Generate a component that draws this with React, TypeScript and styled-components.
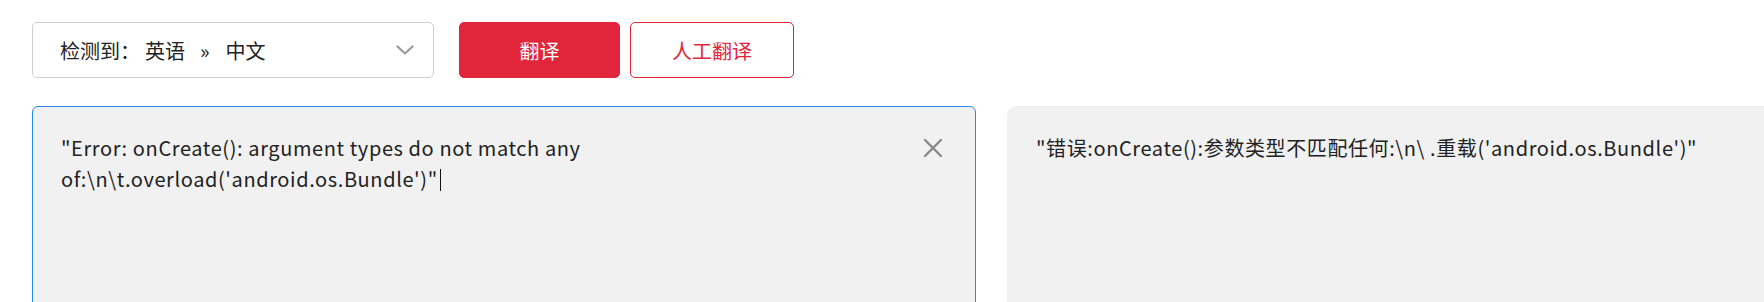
import styled, { createGlobalStyle } from 'styled-components';

const GlobalStyle = createGlobalStyle`
    * {
        box-sizing: border-box;
    }
    body {
        margin: 0;
        background: #fff;
        overflow: hidden;
        font-family: 'Noto Sans CJK SC', 'Noto Sans', sans-serif;
        color: #333;
    }
`;

const sourceText = `"Error: onCreate(): argument types do not match any of:\\n\\t.overload('android.os.Bundle')"`;
const resultText = `"错误:onCreate():参数类型不匹配任何:\\n\\ .重载('android.os.Bundle')"`;

function Chevron() {
    return (
        <svg width="18" height="10" viewBox="0 0 18 10" fill="none">
            <polyline points="1.5,1.5 9,8.5 16.5,1.5" stroke="#9a9a9a" strokeWidth="2.2" strokeLinecap="round" strokeLinejoin="round" />
        </svg>
    );
}

function CloseIcon() {
    return (
        <svg width="20" height="20" viewBox="0 0 20 20" fill="none">
            <path d="M2 2 L18 18 M18 2 L2 18" stroke="#8a8a8a" strokeWidth="2.4" strokeLinecap="round" />
        </svg>
    );
}

export default function App() {
    return (
        <>
            <GlobalStyle />
            <Page>
                <Toolbar>
                    <LangSelect>
                        <LangLabel>
                            <Detected>检测到：</Detected>英语<Arrow>»</Arrow>中文
                        </LangLabel>
                        <Chevron />
                    </LangSelect>
                    <ActionButton variant="solid">翻译</ActionButton>
                    <ActionButton variant="outline">人工翻译</ActionButton>
                </Toolbar>
                <Panels>
                    <Panel focused>
                        <PanelText>
                            {sourceText}
                            <Caret />
                        </PanelText>
                        <ClearButton>
                            <CloseIcon />
                        </ClearButton>
                    </Panel>
                    <Panel>
                        <PanelText>{resultText}</PanelText>
                    </Panel>
                </Panels>
            </Page>
        </>
    );
}

const Page = styled.div`
    padding: 22px 0 0 32px;
`;

const Toolbar = styled.div`
    display: flex;
    align-items: center;
    height: 56px;
`;

const LangSelect = styled.div`
    width: 402px;
    height: 56px;
    border: 1px solid #cfcfcf;
    border-radius: 5px;
    display: flex;
    align-items: center;
    justify-content: space-between;
    padding: 0 19px 0 27px;
    margin-right: 25px;
    cursor: pointer;
`;

const LangLabel = styled.span`
    font-size: 20px;
    color: #222;
    white-space: nowrap;
`;

const Detected = styled.span`
    margin-right: 5px;
`;

const Arrow = styled.span`
    margin: 0 16px 0 15px;
`;

const ActionButton = styled.button<{ variant: 'solid' | 'outline' }>`
    height: 56px;
    width: ${({ variant }) => (variant === 'solid' ? '161px' : '164px')};
    margin-right: 10px;
    border-radius: 5px;
    border: 1px solid #e1253a;
    background: ${({ variant }) => (variant === 'solid' ? '#e1253a' : '#fff')};
    color: ${({ variant }) => (variant === 'solid' ? '#fff' : '#e1253a')};
    font-family: inherit;
    font-size: 20px;
    cursor: pointer;
    padding: 0;
`;

const Panels = styled.div`
    display: flex;
    gap: 31px;
    margin-top: 28px;
`;

const Panel = styled.div<{ focused?: boolean }>`
    position: relative;
    flex: 0 0 944px;
    height: 240px;
    background: #f1f1f1;
    border: 1px solid ${({ focused }) => (focused ? '#2c86f1' : 'transparent')};
    border-radius: ${({ focused }) => (focused ? '6px' : '9px')};
    padding: 25px ${({ focused }) => (focused ? '90px' : '28px')} 0 28px;
`;

const PanelText = styled.div`
    font-size: 20px;
    letter-spacing: 0.6px;
    line-height: 31px;
    color: #222;
    overflow-wrap: break-word;
`;

const Caret = styled.span`
    display: inline-block;
    width: 1px;
    height: 22px;
    margin-left: 2px;
    background: #111;
    vertical-align: -4px;
`;

const ClearButton = styled.div`
    position: absolute;
    top: 31px;
    right: 32px;
    width: 20px;
    height: 20px;
    display: flex;
    cursor: pointer;
`;
